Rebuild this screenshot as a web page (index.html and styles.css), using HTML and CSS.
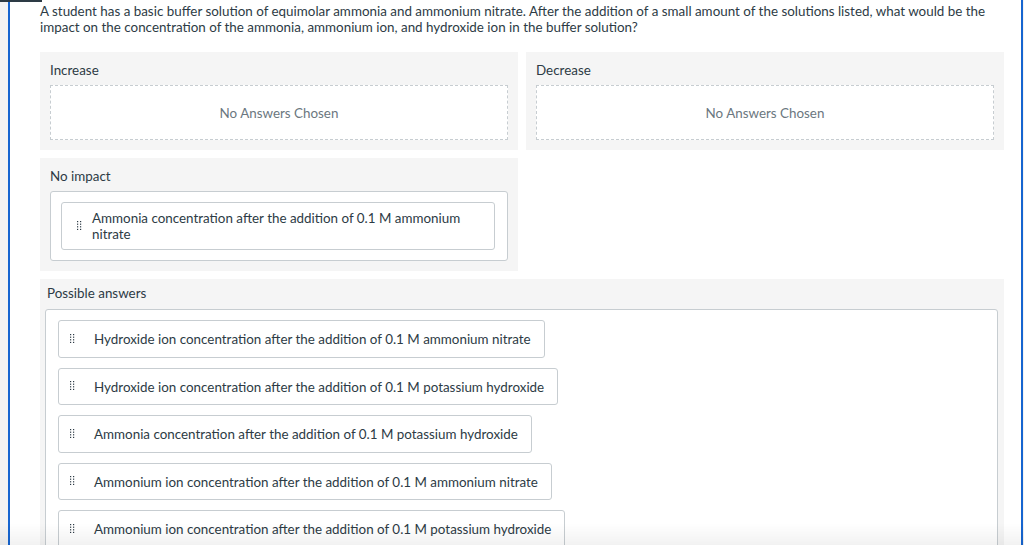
FILE: index.html
```html
<!DOCTYPE html>
<html lang="en">
<head>
    <meta charset="UTF-8">
    <meta name="viewport" content="width=device-width, initial-scale=1.0">
    <title>Categorization question</title>
    <link rel="stylesheet" href="styles.css">
</head>
<body>
    <div class="top-tab"></div>
    <div class="gutter"></div>
    <div class="main">
        <p class="question">A student has a basic buffer solution of equimolar ammonia and ammonium nitrate. After the addition of a small amount of the solutions listed, what would be the impact on the concentration of the ammonia, ammonium ion, and hydroxide ion in the buffer solution?</p>

        <div class="categories">
            <div class="category">
                <div class="category-label">Increase</div>
                <div class="dropzone">No Answers Chosen</div>
            </div>
            <div class="category">
                <div class="category-label">Decrease</div>
                <div class="dropzone">No Answers Chosen</div>
            </div>
            <div class="category">
                <div class="category-label">No impact</div>
                <div class="chosen">
                    <div class="answer chosen-answer">
                        <svg class="handle" width="5" height="11" viewBox="0 0 5 11"><g fill="#2d3b45"><rect x="0" y="0" width="1.2" height="1.2"/><rect x="3" y="0" width="1.2" height="1.2"/><rect x="0" y="2.6" width="1.2" height="1.2"/><rect x="3" y="2.6" width="1.2" height="1.2"/><rect x="0" y="5.2" width="1.2" height="1.2"/><rect x="3" y="5.2" width="1.2" height="1.2"/><rect x="0" y="7.8" width="1.2" height="1.2"/><rect x="3" y="7.8" width="1.2" height="1.2"/></g></svg>
                        <span>Ammonia concentration after the addition of 0.1 M ammonium nitrate</span>
                    </div>
                </div>
            </div>
        </div>

        <div class="possible">
            <div class="possible-label">Possible answers</div>
            <div class="answer-list">
                <div class="answer">
                    <svg class="handle" width="5" height="11" viewBox="0 0 5 11"><g fill="#2d3b45"><rect x="0" y="0" width="1.2" height="1.2"/><rect x="3" y="0" width="1.2" height="1.2"/><rect x="0" y="2.6" width="1.2" height="1.2"/><rect x="3" y="2.6" width="1.2" height="1.2"/><rect x="0" y="5.2" width="1.2" height="1.2"/><rect x="3" y="5.2" width="1.2" height="1.2"/><rect x="0" y="7.8" width="1.2" height="1.2"/><rect x="3" y="7.8" width="1.2" height="1.2"/></g></svg>
                    <span>Hydroxide ion concentration after the addition of 0.1 M ammonium nitrate</span>
                </div>
                <div class="answer">
                    <svg class="handle" width="5" height="11" viewBox="0 0 5 11"><g fill="#2d3b45"><rect x="0" y="0" width="1.2" height="1.2"/><rect x="3" y="0" width="1.2" height="1.2"/><rect x="0" y="2.6" width="1.2" height="1.2"/><rect x="3" y="2.6" width="1.2" height="1.2"/><rect x="0" y="5.2" width="1.2" height="1.2"/><rect x="3" y="5.2" width="1.2" height="1.2"/><rect x="0" y="7.8" width="1.2" height="1.2"/><rect x="3" y="7.8" width="1.2" height="1.2"/></g></svg>
                    <span>Hydroxide ion concentration after the addition of 0.1 M potassium hydroxide</span>
                </div>
                <div class="answer">
                    <svg class="handle" width="5" height="11" viewBox="0 0 5 11"><g fill="#2d3b45"><rect x="0" y="0" width="1.2" height="1.2"/><rect x="3" y="0" width="1.2" height="1.2"/><rect x="0" y="2.6" width="1.2" height="1.2"/><rect x="3" y="2.6" width="1.2" height="1.2"/><rect x="0" y="5.2" width="1.2" height="1.2"/><rect x="3" y="5.2" width="1.2" height="1.2"/><rect x="0" y="7.8" width="1.2" height="1.2"/><rect x="3" y="7.8" width="1.2" height="1.2"/></g></svg>
                    <span>Ammonia concentration after the addition of 0.1 M potassium hydroxide</span>
                </div>
                <div class="answer">
                    <svg class="handle" width="5" height="11" viewBox="0 0 5 11"><g fill="#2d3b45"><rect x="0" y="0" width="1.2" height="1.2"/><rect x="3" y="0" width="1.2" height="1.2"/><rect x="0" y="2.6" width="1.2" height="1.2"/><rect x="3" y="2.6" width="1.2" height="1.2"/><rect x="0" y="5.2" width="1.2" height="1.2"/><rect x="3" y="5.2" width="1.2" height="1.2"/><rect x="0" y="7.8" width="1.2" height="1.2"/><rect x="3" y="7.8" width="1.2" height="1.2"/></g></svg>
                    <span>Ammonium ion concentration after the addition of 0.1 M ammonium nitrate</span>
                </div>
                <div class="answer">
                    <svg class="handle" width="5" height="11" viewBox="0 0 5 11"><g fill="#2d3b45"><rect x="0" y="0" width="1.2" height="1.2"/><rect x="3" y="0" width="1.2" height="1.2"/><rect x="0" y="2.6" width="1.2" height="1.2"/><rect x="3" y="2.6" width="1.2" height="1.2"/><rect x="0" y="5.2" width="1.2" height="1.2"/><rect x="3" y="5.2" width="1.2" height="1.2"/><rect x="0" y="7.8" width="1.2" height="1.2"/><rect x="3" y="7.8" width="1.2" height="1.2"/></g></svg>
                    <span>Ammonium ion concentration after the addition of 0.1 M potassium hydroxide</span>
                </div>
            </div>
        </div>
    </div>
    <div class="bottom-fade"></div>
</body>
</html>
```

FILE: styles.css
```css
body {
    margin: 0;
    display: flex;
    font-family: Lato, "Liberation Sans", sans-serif;
    font-size: 13.4px;
    line-height: 16px;
    color: #2d3b45;
    background: #f3f3f3;
    overflow: hidden;
    height: 545px;
}
.top-tab {
    position: absolute;
    left: 0;
    top: 0;
    width: 42px;
    height: 2px;
    background: #2d3b45;
}
.gutter {
    width: 8px;
    flex: none;
}
.main {
    flex: 1;
    background: #fff;
    border-left: 2px solid #1665d0;
    border-right: 2px solid #1665d0;
    margin-right: 1px;
    padding: 3px 17px 0 30px;
    overflow: hidden;
}
.question {
    margin: 0 0 17px 0;
}
.categories {
    display: grid;
    grid-template-columns: 1fr 1fr;
    gap: 8px;
    align-items: start;
}
.category {
    background: #f5f5f5;
    padding: 10px;
}
.category-label {
    margin-bottom: 7px;
}
.dropzone {
    border: 1px dashed #c7cdd1;
    background: #fff;
    height: 53px;
    display: flex;
    align-items: center;
    justify-content: center;
    color: #6b7780;
}
.chosen {
    background: #fff;
    border: 1px solid #c7cdd1;
    border-radius: 3px;
    padding: 10px 12px 10px 10px;
}
.answer {
    display: inline-flex;
    align-items: center;
    background: #fff;
    border: 1px solid #c7cdd1;
    border-radius: 3px;
    padding: 10px 13px 9.5px 11px;
}
.answer .handle {
    flex: none;
    margin-right: 19px;
}
.chosen-answer {
    display: flex;
    padding: 7px 30px 7px 15px;
}
.chosen-answer .handle {
    margin-right: 10px;
}
.possible {
    margin-top: 8px;
    background: #f5f5f5;
    padding: 6px 6px 0 5px;
    height: 260px;
}
.possible-label {
    padding-left: 2px;
    margin-bottom: 8px;
}
.answer-list {
    background: #fff;
    border: 1px solid #c7cdd1;
    border-radius: 3px 3px 0 0;
    padding: 10px 12px;
    height: 240px;
    display: flex;
    flex-direction: column;
    align-items: flex-start;
    gap: 10px;
}
.bottom-fade {
    position: fixed;
    left: 0;
    right: 0;
    bottom: 0;
    height: 22px;
    background: linear-gradient(rgba(0, 0, 0, 0), rgba(0, 0, 0, 0.05));
}
```
